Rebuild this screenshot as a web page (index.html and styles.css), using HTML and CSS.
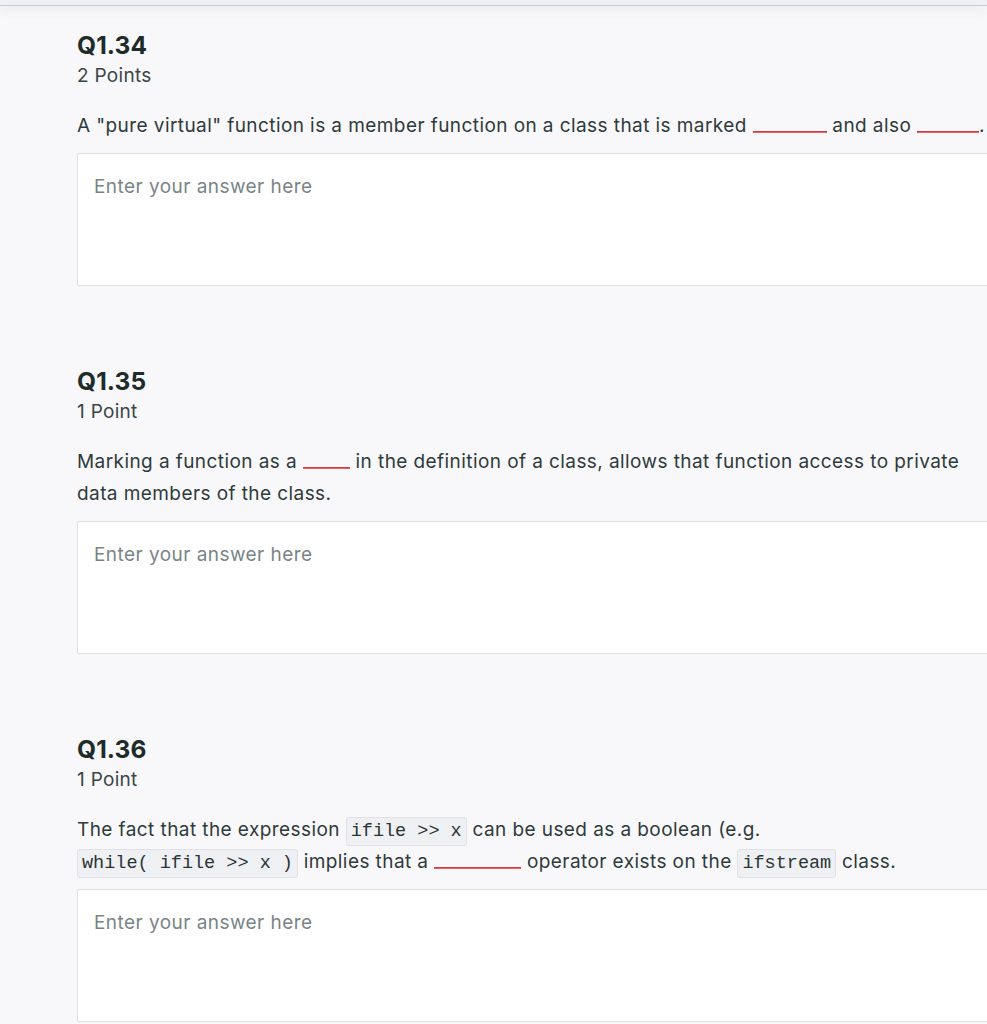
FILE: index.html
```html
<!DOCTYPE html>
<html>
<head>
<meta charset="utf-8">
<link rel="stylesheet" href="styles.css">
</head>
<body>
<div class="topbar"></div>
<main class="page">
  <section class="question">
    <h2 class="q-title">Q1.34</h2>
    <div class="q-points">2 Points</div>
    <p class="q-text">A "pure virtual" function is a member function on a class that is marked <span class="blank b74"></span> and also <span class="blank b62"></span>.</p>
    <div class="answer">Enter your answer here</div>
  </section>
  <section class="question">
    <h2 class="q-title">Q1.35</h2>
    <div class="q-points">1 Point</div>
    <p class="q-text">Marking a function as a <span class="blank b47"></span> in the definition of a class, allows that function access to private data members of the class.</p>
    <div class="answer">Enter your answer here</div>
  </section>
  <section class="question">
    <h2 class="q-title">Q1.36</h2>
    <div class="q-points">1 Point</div>
    <p class="q-text">The fact that the expression <code class="code">ifile &gt;&gt; x</code> can be used as a boolean (e.g.<br><code class="code">while( ifile &gt;&gt; x )</code> implies that a <span class="blank b87"></span> operator exists on the <code class="code">ifstream</code> class.</p>
    <div class="answer">Enter your answer here</div>
  </section>
</main>
</body>
</html>
```
FILE: styles.css
```css
html, body {
  margin: 0;
  padding: 0;
  overflow: hidden;
}
body {
  background: #f8f8fa;
  font-family: "Inter", "Liberation Sans", sans-serif;
  color: #2f3a3a;
  width: 987px;
  height: 1024px;
}
.topbar {
  height: 5px;
  background: #eff0f5;
  border-bottom: 1px solid #c6ccd4;
  box-shadow: 0 3px 12px rgba(60, 70, 80, 0.10);
  position: relative;
}
.page {
  padding: 24px 0 0 77px;
}
.question {
  margin-bottom: 80px;
}
.q-title {
  margin: 0;
  font-size: 24.5px;
  line-height: 30px;
  font-weight: 700;
  color: #1e2b2a;
  letter-spacing: 0.1px;
}
.q-points {
  margin-top: 1px;
  font-size: 19px;
  line-height: 30px;
  letter-spacing: 0.3px;
  color: #3a4545;
}
.q-text {
  margin: 19px 0 0 0;
  font-size: 19px;
  line-height: 32px;
  letter-spacing: 0.42px;
  width: 916px;
}
.blank {
  display: inline-block;
  height: 2px;
  background: linear-gradient(#d6383b, #d6383b 60%, rgba(214, 56, 59, 0.35));
  vertical-align: -1px;
}
.b74 { width: 74px; }
.b62 { width: 62px; }
.b47 { width: 47px; }
.b87 { width: 87px; }
.code {
  font-family: "Liberation Mono", "Courier New", monospace;
  font-size: 18.5px;
  letter-spacing: 0;
  line-height: 1;
  background: #eff0f4;
  border: 1px solid #e0e2e7;
  border-radius: 3px;
  padding: 3px 4px;
  color: #2a3434;
}
.answer {
  margin-top: 11px;
  width: 960px;
  box-sizing: content-box;
  background: #ffffff;
  border: 1px solid #dfe1e6;
  border-radius: 2px;
  font-size: 19px;
  line-height: 24px;
  letter-spacing: 0.45px;
  color: #7a8486;
  text-indent: 16px;
  padding-top: 21px;
  height: 110px;
}
```
